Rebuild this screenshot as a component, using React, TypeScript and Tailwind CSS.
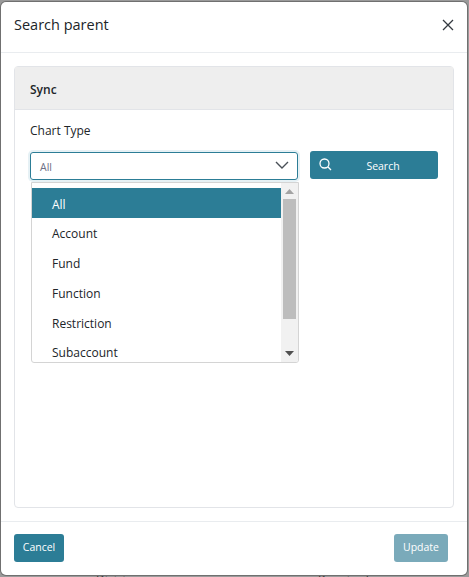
const options = ["All", "Account", "Fund", "Function", "Restriction", "Subaccount"];

export default function App() {
  return (
    <div className="relative h-[577px] w-[469px] overflow-hidden bg-[#9a9a9a] pt-[2px] pl-[1px] font-['Open_Sans','Noto_Sans',sans-serif] text-[#212529]">
      <div className="absolute top-[571px] left-[96px] text-[12px] text-[#333333]">Division</div>
      <div className="absolute top-[571px] left-[318px] text-[12px] text-[#333333]">Required</div>
      <div className="relative flex h-[573px] w-[466px] flex-col rounded-[5px] bg-white shadow-[0_0_0_1px_#707070]">
        <div className="flex h-[51px] items-start justify-between border-b border-[#e9ecef] pt-[12px] pr-[13px] pl-[13px]">
          <h1 className="text-[14.500px] leading-[21px]">Search parent</h1>
          <svg className="mt-[5px]" width="12" height="12" viewBox="0 0 12 12" fill="none" stroke="#343a40" strokeWidth="1.3">
            <path d="M1 1l10 10M11 1L1 11" />
          </svg>
        </div>

        <div className="flex-1 px-[13px] pt-[13px] pb-[13px]">
          <div className="flex h-[442px] flex-col rounded-[4px] border border-[#e2e4e8]">
            <div className="flex h-[43px] items-center border-b border-[#e2e4e8] bg-[#eeeeee] px-[15px] pt-[5px] text-[12px] font-semibold">
              Sync
            </div>
            <div className="px-[15px] pt-[12px]">
              <div className="text-[12px] leading-[18px]">Chart Type</div>
              <div className="mt-[12px] flex items-start gap-[12px]">
                <div className="relative w-[268px]">
                  <div className="flex h-[28px] items-center justify-between rounded-[3px] border border-[#2c7d96] pr-[8px] pl-[9px] text-[10.500px] text-[#6c6f85] shadow-[0_0_0_2px_#e6f1f5]">
                    <span className="pt-[4px]">All</span>
                    <svg className="mb-[2px]" width="14" height="8" viewBox="0 0 14 8" fill="none" stroke="#495057" strokeWidth="1.4">
                      <path d="M1 1l6 6 6-6" />
                    </svg>
                  </div>
                  <div className="absolute top-[30px] left-[1px] z-10 flex h-[181px] w-[268px] overflow-hidden rounded-b-[3px] border border-[#d4d4d4] bg-white">
                    <div className="flex-1 pt-[5px]">
                      {options.map((option, i) => (
                        <div
                          key={option}
                          className={
                            i === 0
                              ? "flex h-[30px] items-center bg-[#2c7d96] pt-[4px] pl-[20px] text-[12px] font-medium text-white"
                              : "flex h-[29.700px] items-center pt-[4px] pl-[20px] text-[12px]"
                          }
                        >
                          {option}
                        </div>
                      ))}
                    </div>
                    <div className="flex w-[17px] flex-col items-center bg-[#f1f1f1]">
                      <svg className="mt-[6px]" width="9" height="5" viewBox="0 0 9 5" fill="#a3a3a3">
                        <path d="M4.500 0L9 5H0z" />
                      </svg>
                      <div className="mt-[5px] h-[120px] w-[13px] bg-[#bdbdbd]" />
                      <svg className="mt-auto mb-[6px]" width="9" height="5" viewBox="0 0 9 5" fill="#505050">
                        <path d="M0 0h9L4.500 5z" />
                      </svg>
                    </div>
                  </div>
                </div>
                <button className="relative -mt-[1px] flex h-[28px] w-[128px] items-center justify-center rounded-[3px] bg-[#2c7d96] pt-[5px] pl-[18px] text-[10.500px] text-white">
                  <svg className="absolute top-[7px] left-[9px]" width="13" height="13" viewBox="0 0 13 13" fill="none" stroke="white" strokeWidth="1.3">
                    <circle cx="5.500" cy="5.500" r="4.500" />
                    <path d="M8.800 8.800L12 12" />
                  </svg>
                  Search
                </button>
              </div>
            </div>
          </div>
        </div>

        <div className="flex h-[55px] items-center justify-between border-t border-[#e9ecef] pr-[19px] pl-[13px]">
          <button className="h-[28px] w-[50px] rounded-[3px] bg-[#2c7d96] text-[10.500px] font-medium text-white">Cancel</button>
          <button className="h-[28px] w-[54px] rounded-[3px] bg-[#7aaaba] text-[10.500px] font-medium text-white">Update</button>
        </div>
      </div>
    </div>
  );
}
